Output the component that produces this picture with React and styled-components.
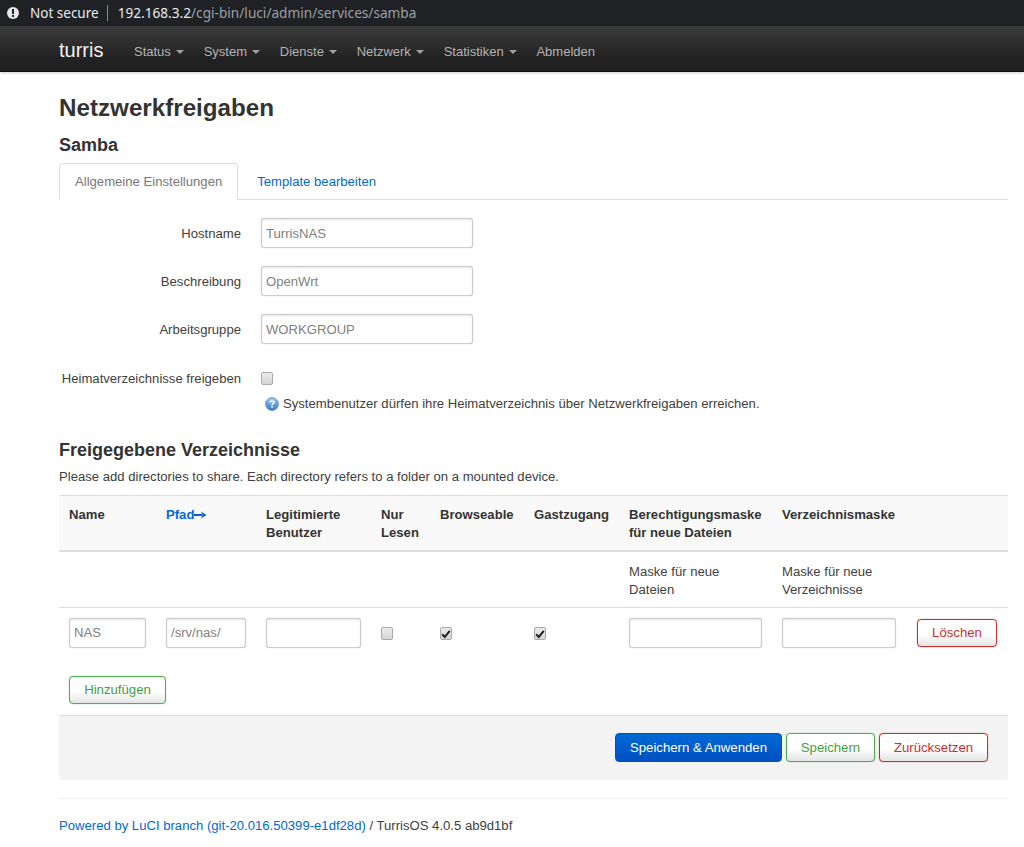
import styled, { createGlobalStyle } from 'styled-components';

const GlobalStyle = createGlobalStyle`
  html, body {
    margin: 0;
    padding: 0;
    background: #fff;
    color: #333;
    font-family: "Liberation Sans", Arial, sans-serif;
    font-size: 13.12px;
    line-height: 18px;
  }
  * { box-sizing: border-box; }
`;

const navItems = [
  { label: 'Status', caret: true },
  { label: 'System', caret: true },
  { label: 'Dienste', caret: true },
  { label: 'Netzwerk', caret: true },
  { label: 'Statistiken', caret: true },
  { label: 'Abmelden' },
];

const formFields = [
  { label: 'Hostname', value: 'TurrisNAS' },
  { label: 'Beschreibung', value: 'OpenWrt' },
  { label: 'Arbeitsgruppe', value: 'WORKGROUP' },
];

function Checkbox({ checked }) {
  return (
    <CheckBoxMark>
      {checked && (
        <svg width="10" height="10" viewBox="0 0 10 10">
          <path d="M1.2 5.2 L3.8 8 L8.8 1.8" fill="none" stroke="#222" strokeWidth="2" />
        </svg>
      )}
    </CheckBoxMark>
  );
}

function Field({ value, width }) {
  return <TextInput readOnly value={value || ''} $width={width} />;
}

export default function App() {
  return (
    <>
      <GlobalStyle />
      <AddressBar>
        <svg width="16" height="16" viewBox="0 0 16 16">
          <circle cx="8" cy="8" r="6" fill="#e8e8e8" />
          <rect x="7" y="4" width="2" height="5" fill="#202124" />
          <rect x="7" y="10" width="2" height="2" fill="#202124" />
        </svg>
        <Insecure>Not secure</Insecure>
        <BarDivider />
        <Url>192.168.3.2<span>/cgi-bin/luci/admin/services/samba</span></Url>
      </AddressBar>
      <Navbar>
        <Brand>turris</Brand>
        <NavList>
          {navItems.map((item) => (
            <NavLink key={item.label}>
              {item.label}
              {item.caret && <Caret />}
            </NavLink>
          ))}
        </NavList>
      </Navbar>
      <Main>
        <PageTitle>Netzwerkfreigaben</PageTitle>
        <SectionTitle>Samba</SectionTitle>
        <Tabs>
          <Tab $active>Allgemeine Einstellungen</Tab>
          <Tab>Template bearbeiten</Tab>
        </Tabs>
        <Form>
          {formFields.map((f) => (
            <FormRow key={f.label}>
              <FieldLabel>{f.label}</FieldLabel>
              <Field value={f.value} width={212} />
            </FormRow>
          ))}
          <CheckRow>
            <FormLabel>Heimatverzeichnisse freigeben</FormLabel>
            <Checkbox />
          </CheckRow>
          <HelpRow>
            <svg width="14" height="14" viewBox="0 0 14 14">
              <defs>
                <linearGradient id="help" x1="0" y1="0" x2="0" y2="1">
                  <stop offset="0" stopColor="#a5c9ec" />
                  <stop offset="1" stopColor="#2f78c4" />
                </linearGradient>
              </defs>
              <circle cx="7" cy="7" r="6.5" fill="url(#help)" stroke="#3d7fc0" strokeWidth="0.6" />
              <path d="M5 5.4 C5 3.4 9 3.4 9 5.4 C9 6.7 7 6.7 7 8.2" fill="none" stroke="#fff" strokeWidth="1.5" />
              <rect x="6.2" y="9.2" width="1.6" height="1.6" fill="#fff" />
            </svg>
            Systembenutzer dürfen ihre Heimatverzeichnis über Netzwerkfreigaben erreichen.
          </HelpRow>
        </Form>

        <SharesTitle>Freigegebene Verzeichnisse</SharesTitle>
        <Description>Please add directories to share. Each directory refers to a folder on a mounted device.</Description>
        <Table>
          <colgroup>
            {[97, 100, 115, 59, 94, 95, 153, 135, 101].map((w, i) => (
              <col key={i} width={w} />
            ))}
          </colgroup>
          <thead>
            <tr>
              <Th>Name</Th>
              <Th>
                <SortLink>
                  Pfad
                  <svg width="13" height="8" viewBox="0 0 13 8">
                    <path d="M0 3.5 H8 M0 4.5 H8" stroke="#0a5fd0" strokeWidth="1" />
                    <path d="M7 0.5 L12.5 4 L7 7.5 L8.5 4 Z" fill="#0a5fd0" />
                  </svg>
                </SortLink>
              </Th>
              <Th>Legitimierte Benutzer</Th>
              <Th>Nur Lesen</Th>
              <Th>Browseable</Th>
              <Th>Gastzugang</Th>
              <Th>Berechtigungsmaske für neue Dateien</Th>
              <Th>Verzeichnismaske</Th>
              <Th />
            </tr>
          </thead>
          <tbody>
            <tr>
              <HintCell colSpan={6} />
              <HintCell>Maske für neue Dateien</HintCell>
              <HintCell>Maske für neue Verzeichnisse</HintCell>
              <HintCell />
            </tr>
            <tr>
              <Td><Field value="NAS" width={77} /></Td>
              <Td><Field value="/srv/nas/" width={80} /></Td>
              <Td><Field width={95} /></Td>
              <CheckTd><Checkbox /></CheckTd>
              <CheckTd><Checkbox checked /></CheckTd>
              <CheckTd><Checkbox checked /></CheckTd>
              <Td><Field width={133} /></Td>
              <Td><Field width={114} /></Td>
              <Td><Button $tone="red" $w={80}>Löschen</Button></Td>
            </tr>
          </tbody>
        </Table>
        <AddRow>
          <Button $tone="green" $w={97}>Hinzufügen</Button>
        </AddRow>
        <ActionBar>
          <PrimaryButton>Speichern &amp; Anwenden</PrimaryButton>
          <Button $tone="green" $w={89} $h={29}>Speichern</Button>
          <Button $tone="red" $w={109} $h={29}>Zurücksetzen</Button>
        </ActionBar>
        <Footer>
          <FooterLink>Powered by LuCI branch (git-20.016.50399-e1df28d)</FooterLink> / TurrisOS 4.0.5 ab9d1bf
        </Footer>
      </Main>
    </>
  );
}

const AddressBar = styled.div`
  height: 26px;
  background: #202124;
  display: flex;
  align-items: center;
  padding-left: 5px;
  font-family: "Noto Sans", "Open Sans", sans-serif;
  font-size: 13.5px;
`;

const Insecure = styled.span`
  color: #e8eaed;
  margin-left: 9px;
`;

const BarDivider = styled.span`
  width: 1px;
  height: 16px;
  background: #8a8b8d;
  margin: 0 10px 0 8px;
`;

const Url = styled.span`
  color: #e8eaed;
  font-size: 13.65px;
  span { color: #9aa0a6; }
`;

const Navbar = styled.div`
  height: 46px;
  padding: 7px 0 0 59px;
  background: linear-gradient(#3c3c3c, #222 70%, #1f1f1f);
  border-bottom: 1px solid #111;
  box-shadow: 0 1px 3px rgba(0, 0, 0, 0.2);
  display: flex;
  align-items: center;
`;

const Brand = styled.div`
  color: #f2f2f2;
  font-size: 20px;
  width: 75px;
  margin-top: -4px;
`;

const NavList = styled.div`
  display: flex;
  gap: 19.8px;
`;

const NavLink = styled.span`
  color: #b4b4b4;
  font-size: 13px;
  display: flex;
  align-items: center;
`;

const Caret = styled.span`
  width: 0;
  height: 0;
  margin-left: 5px;
  border-left: 4px solid transparent;
  border-right: 4px solid transparent;
  border-top: 4px solid #a0a0a0;
`;

const Main = styled.main`
  padding: 0 16px 0 59px;
`;

const PageTitle = styled.h2`
  margin: 0;
  padding-top: 21px;
  font-size: 24.2px;
  line-height: 30px;
  font-weight: bold;
`;

const SectionTitle = styled.h3`
  margin: 11px 0 0;
  font-size: 18px;
  line-height: 22px;
  font-weight: bold;
`;

const Tabs = styled.div`
  margin-top: 7px;
  height: 37px;
  display: flex;
  border-bottom: 1px solid #ddd;
`;

const Tab = styled.div`
  height: 37px;
  line-height: 36px;
  padding: 0 15px;
  margin-right: 3px;
  border: 1px solid ${(p) => (p.$active ? '#ddd' : 'transparent')};
  border-bottom-color: ${(p) => (p.$active ? '#fff' : 'transparent')};
  border-radius: 4px 4px 0 0;
  background: ${(p) => (p.$active ? '#fff' : 'transparent')};
  color: ${(p) => (p.$active ? '#777' : '#0069d6')};
`;

const Form = styled.div`
  padding-top: 18px;
  display: flex;
  flex-direction: column;
`;

const FormRow = styled.div`
  display: flex;
  align-items: center;
  gap: 20px;
  height: 30px;
  margin-bottom: 18px;
`;

const CheckRow = styled(FormRow)`
  height: 13px;
  margin: 10px 0 0;
`;

const FormLabel = styled.label`
  width: 182px;
  text-align: right;
  color: #404040;
`;

const FieldLabel = styled(FormLabel)`
  padding-top: 2px;
`;

const HelpRow = styled.div`
  margin: 10px 0 0 206px;
  display: flex;
  align-items: center;
  gap: 4px;
  height: 18px;
  color: #404040;
`;

const SharesTitle = styled.h3`
  margin: 26px 0 0;
  font-size: 18px;
  line-height: 22px;
  font-weight: bold;
`;

const Description = styled.p`
  margin: 5px 0 0;
  line-height: 22px;
  color: #404040;
`;

const Table = styled.table`
  width: 949px;
  margin-top: 7px;
  table-layout: fixed;
  border-collapse: collapse;
`;

const Th = styled.th`
  height: 55px;
  padding: 10px 10px 8px;
  text-align: left;
  vertical-align: top;
  font-weight: bold;
  background: #f9f9f9;
  border-top: 1px solid #ddd;
  border-bottom: 2px solid #ddd;
  color: #333;
`;

const SortLink = styled.span`
  color: #0069d6;
  display: inline-flex;
  align-items: center;
`;

const HintCell = styled.td`
  height: 55px;
  padding: 11px 10px 8px;
  vertical-align: top;
  border-bottom: 1px solid #ddd;
  color: #404040;
`;

const Td = styled.td`
  height: 52px;
  padding: 9px 10px 11px;
  vertical-align: middle;
`;

const CheckTd = styled(Td)`
  padding-top: 11px;
`;

const TextInput = styled.input`
  display: block;
  width: ${(p) => p.$width}px;
  height: 30px;
  padding: 0 4px;
  border: 1px solid #ccc;
  border-radius: 3px;
  box-shadow: inset 0 1px 2px rgba(0, 0, 0, 0.1), 0 0 1px #bbb;
  background: #fff;
  font-family: inherit;
  font-size: 13.12px;
  color: #808080;
  outline: none;
`;

const CheckBoxMark = styled.span`
  display: flex;
  align-items: center;
  justify-content: center;
  width: 12px;
  height: 13px;
  border: 1px solid #aaa;
  border-radius: 2px;
  background: linear-gradient(#eaeaea, #d6d6d6);
`;

const tones = {
  red: { border: '#c9302c', text: '#c9302c' },
  green: { border: '#4cae4c', text: '#3fa33f' },
};

const Button = styled.button`
  width: ${(p) => p.$w}px;
  height: ${(p) => p.$h || 28}px;
  padding: 0;
  border: 1px solid ${(p) => tones[p.$tone].border};
  border-radius: 4px;
  box-shadow: 0 0 1px ${(p) => tones[p.$tone].border};
  background: linear-gradient(#fff 55%, #e4e4e4);
  font-family: inherit;
  font-size: 13.2px;
  color: ${(p) => tones[p.$tone].text};
`;

const AddRow = styled.div`
  padding: 16px 0 0 10px;
  height: 55px;
`;

const ActionBar = styled.div`
  height: 65px;
  padding: 17px 20px 0 0;
  display: flex;
  justify-content: flex-end;
  gap: 4px;
  background: #f3f3f3;
  border-top: 1px solid #ddd;
  border-radius: 0 0 3px 3px;
`;

const PrimaryButton = styled.button`
  width: 167px;
  height: 29px;
  padding: 0;
  border: 1px solid #0050b8;
  border-radius: 4px;
  background: linear-gradient(#0069d6, #0050c0);
  font-family: inherit;
  font-size: 13.2px;
  color: #fff;
`;

const Footer = styled.footer`
  margin-top: 18px;
  padding-top: 18px;
  border-top: 1px solid #eee;
  color: #404040;
`;

const FooterLink = styled.span`
  color: #0069d6;
`;
